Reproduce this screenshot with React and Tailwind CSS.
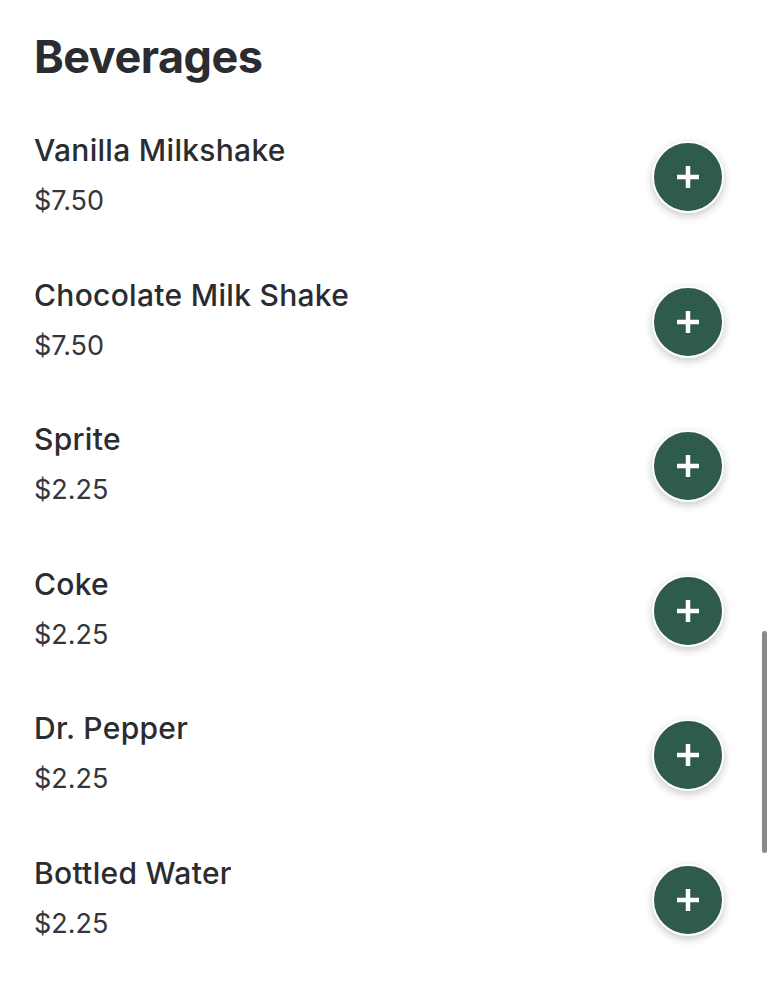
import React from 'react'

const items = [
  { name: 'Vanilla Milkshake', price: '$7.50' },
  { name: 'Chocolate Milk Shake', price: '$7.50' },
  { name: 'Sprite', price: '$2.25' },
  { name: 'Coke', price: '$2.25' },
  { name: 'Dr. Pepper', price: '$2.25' },
  { name: 'Bottled Water', price: '$2.25' },
]

const PlusButton = () => (
  <button className="w-[72px] h-[72px] rounded-full bg-[#2f5b4b] border-2 border-white shadow-[0_3px_8px_rgba(0,0,0,0.22)] flex items-center justify-center">
    <svg width="26" height="26" viewBox="0 0 26 26">
      <path d="M13 2v22M2 13h22" stroke="#fff" strokeWidth="4.5" />
    </svg>
  </button>
)

export default function App() {
  return (
    <div className="relative w-[775px] h-[1000px] bg-white overflow-hidden font-['Inter',sans-serif] text-[#2b2c31]">
      <div className="pl-[34px] pr-[51px] pt-[34px]">
        <h1 className="text-[45px] leading-[46px] font-bold tracking-[-0.5px]">Beverages</h1>
        <ul className="mt-[25px]">
          {items.map((item) => (
            <li key={item.name} className="h-[144.5px] flex items-center justify-between">
              <div>
                <p className="text-[30px] leading-[36px] font-medium tracking-[0.3px] -mt-[3px]">{item.name}</p>
                <p className="mt-[15px] text-[27px] leading-[36px] text-[#35363b]">{item.price}</p>
              </div>
              <PlusButton />
            </li>
          ))}
        </ul>
      </div>
      {/* scrollbar */}
      <div className="absolute left-[762px] top-[631px] w-[5px] h-[222px] rounded-full bg-[#8a8a8a]" />
    </div>
  )
}
